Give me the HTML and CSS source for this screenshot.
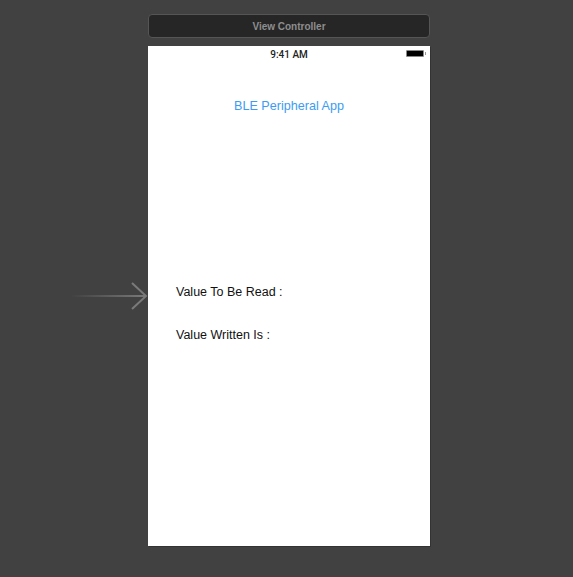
FILE: index.html
```html
<!DOCTYPE html>
<html lang="en">

<head>
    <meta charset="UTF-8">
    <meta name="viewport" content="width=device-width, initial-scale=1.0">
    <title>Main.storyboard</title>
    <link rel="stylesheet" href="styles.css">
</head>

<body>
    <main class="canvas">
        <!-- entry point arrow into the scene -->
        <div class="entry">
            <svg width="78" height="28" viewBox="0 0 78 28">
                <defs>
                    <linearGradient id="fade" gradientUnits="userSpaceOnUse" x1="0" y1="14" x2="76" y2="14">
                        <stop offset="0" stop-color="#777" stop-opacity="0"/>
                        <stop offset="1" stop-color="#7a7a7a"/>
                    </linearGradient>
                </defs>
                <rect x="0" y="13" width="76" height="2" fill="url(#fade)"/>
                <polyline points="62,1 76,14 62,27" fill="none" stroke="#7a7a7a" stroke-width="2"/>
            </svg>
        </div>

        <div class="scene">
            <div class="scene-title">View Controller</div>
            <div class="screen">
                <div class="status">
                    <span class="time">9:41 AM</span>
                    <span class="battery"></span>
                </div>
                <p class="app-title">BLE Peripheral App</p>
                <div class="fields">
                    <p class="field">Value To Be Read :</p>
                    <p class="field">Value Written Is :</p>
                </div>
            </div>
        </div>
    </main>
</body>

</html>
```

FILE: styles.css
```css
body {
    margin: 0;
    background: #414141;
    font-family: "Liberation Sans", Arial, sans-serif;
}
.canvas {
    display: flex;
    padding: 14px 0 0 70px;
    height: 577px;
    box-sizing: border-box;
}
.entry {
    width: 78px;
    margin-top: 268px;
}
.entry svg {
    display: block;
}
.scene {
    display: flex;
    flex-direction: column;
    gap: 8px;
    width: 282px;
}
.scene-title {
    height: 22px;
    line-height: 24px;
    background: #262626;
    border: 1px solid #555;
    border-radius: 4px;
    text-align: center;
    font-size: 10px;
    font-weight: bold;
    color: #8e8e8e;
}
.screen {
    position: relative;
    height: 500px;
    background: #fff;
    box-shadow: 1px 1px 0 #333;
}
.status {
    height: 16px;
    display: flex;
    justify-content: center;
    align-items: center;
}
.time {
    font-family: Roboto, sans-serif;
    font-size: 10px;
    font-weight: 500;
    color: #222;
    margin-top: 1px;
}
.battery {
    position: absolute;
    right: 6px;
    top: 4px;
    width: 16px;
    height: 5px;
    background: #000;
    border: 1px solid #888;
    border-radius: 1px;
}
.battery::after {
    content: "";
    position: absolute;
    right: -3px;
    top: 1px;
    width: 1px;
    height: 3px;
    background: #999;
}
.app-title {
    margin: 37px 0 0;
    text-align: center;
    font-size: 12.6px;
    color: #3c9cf2;
}
.fields {
    display: flex;
    flex-direction: column;
    gap: 27px;
    padding: 0 0 0 28px;
    margin-top: 171px;
}
.field {
    margin: 0;
    font-size: 12.5px;
    line-height: 16px;
    color: #111;
}
```
